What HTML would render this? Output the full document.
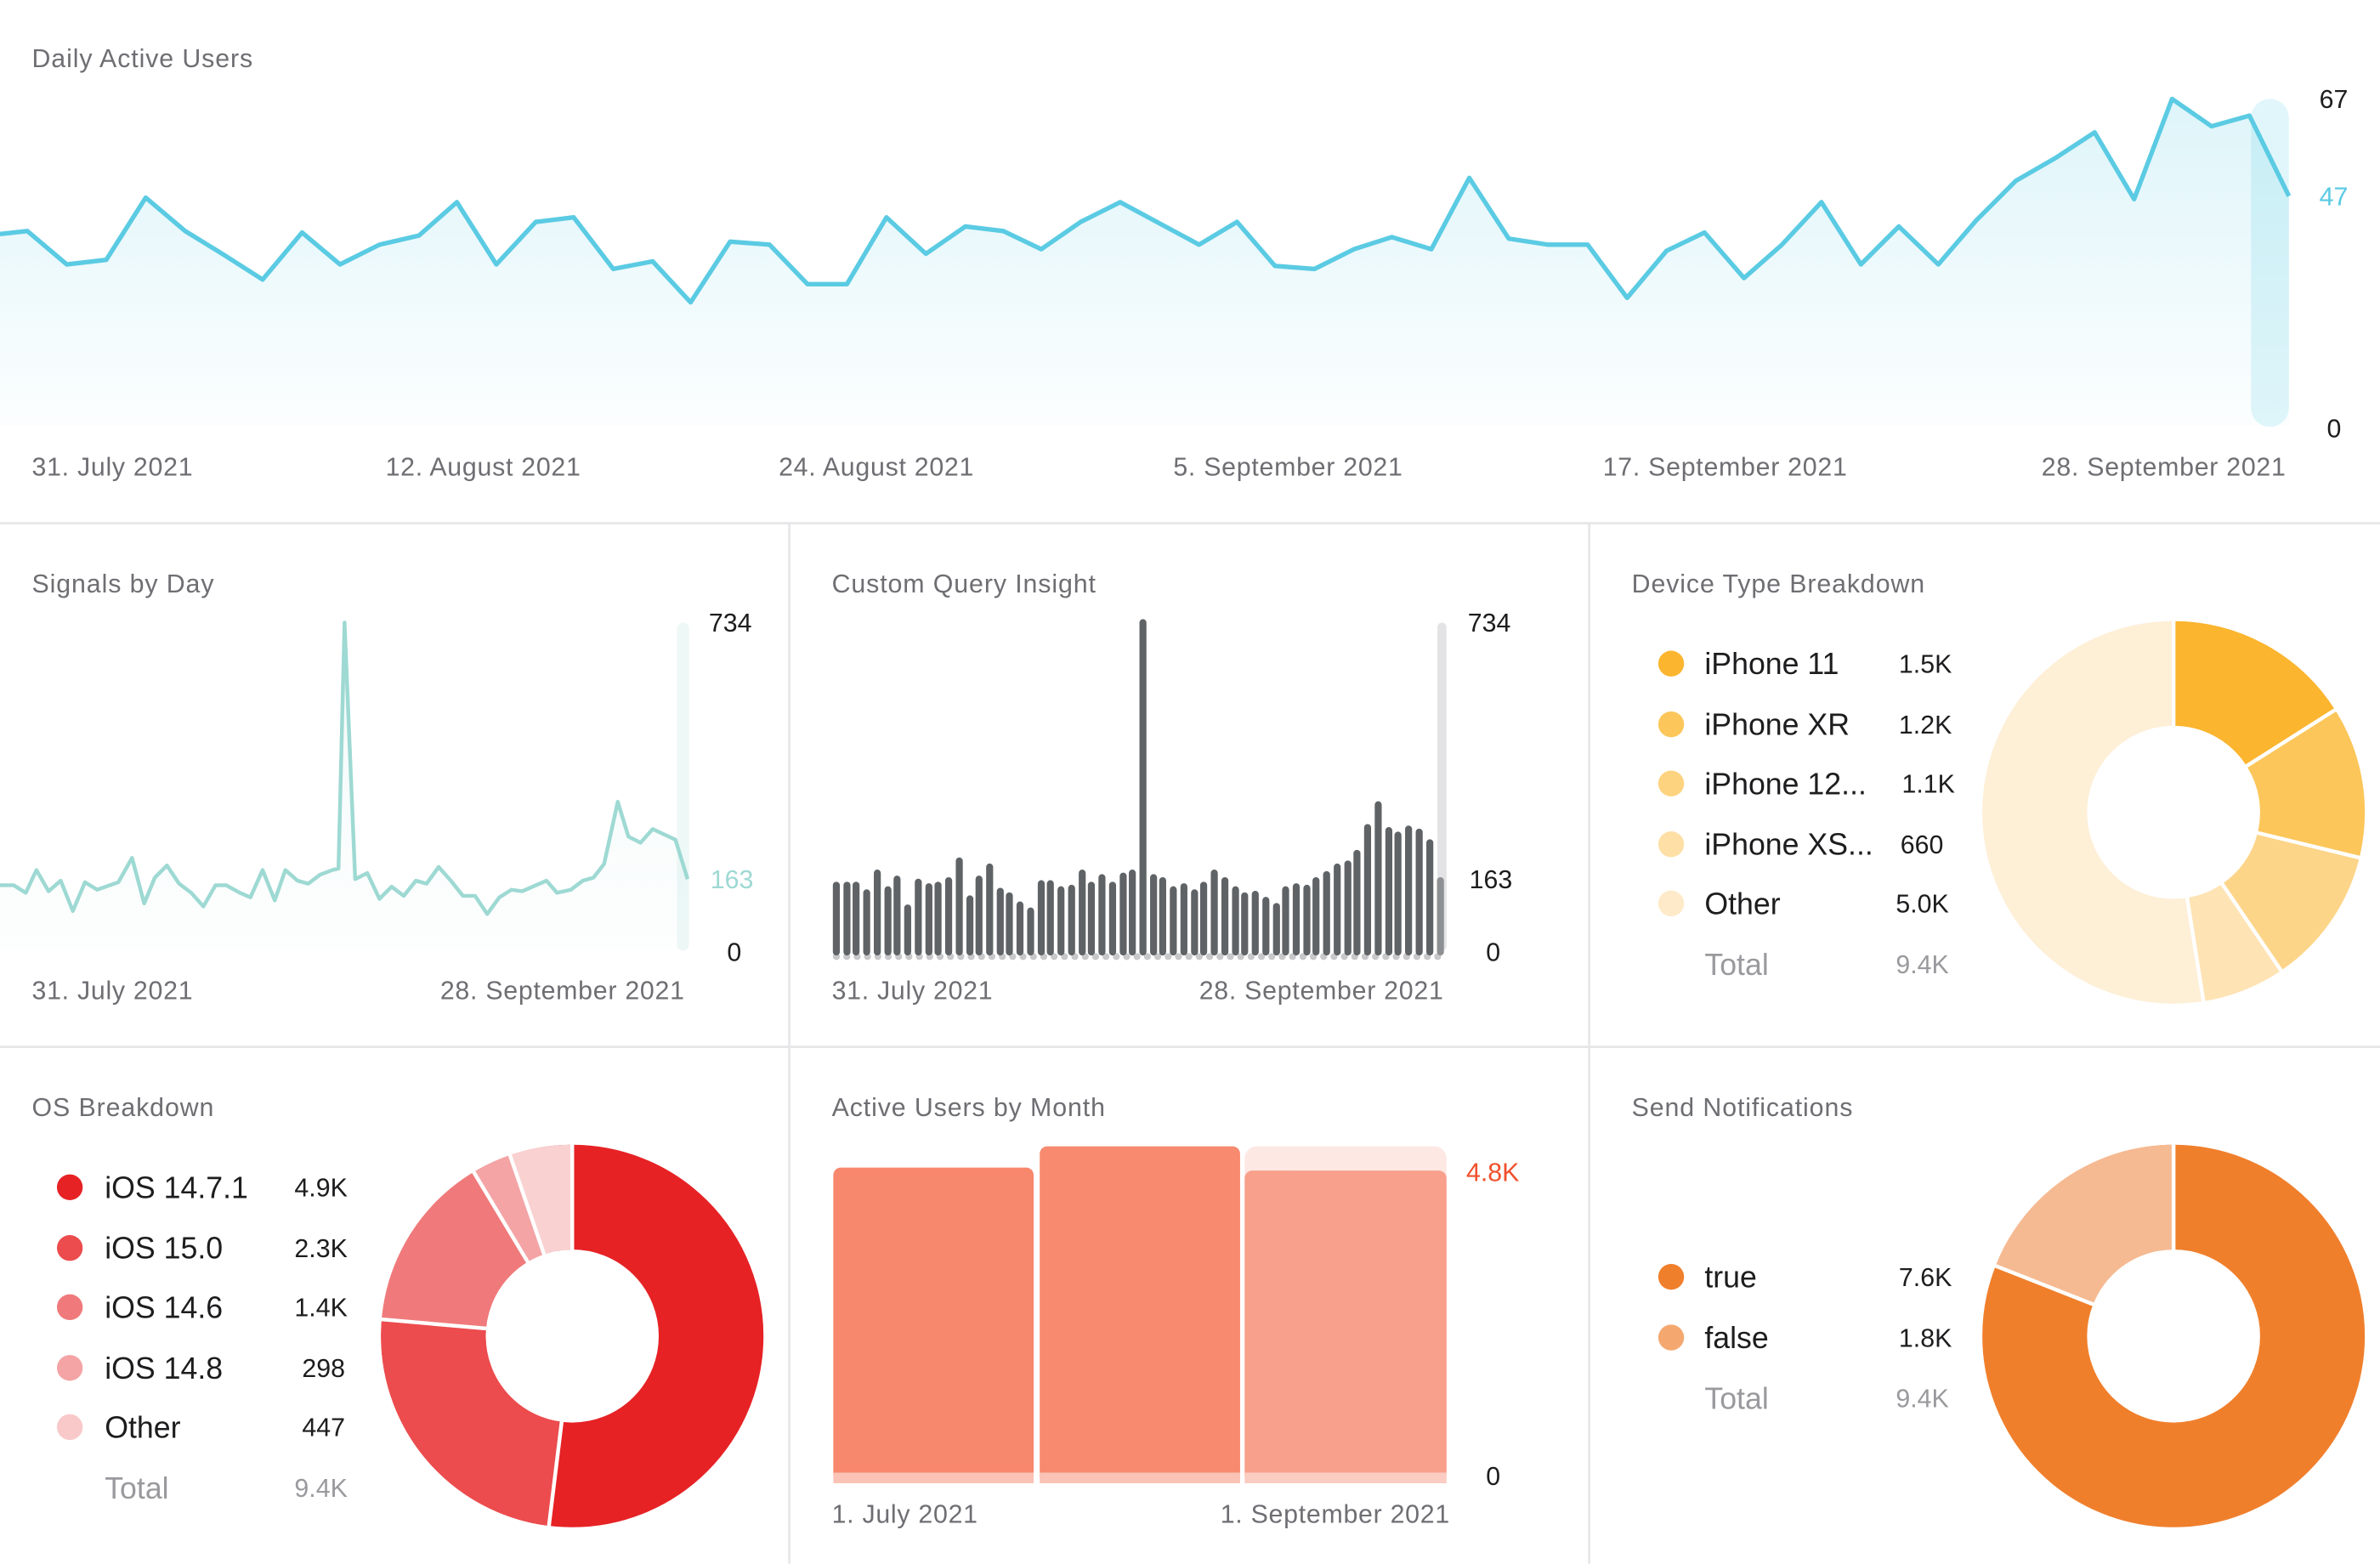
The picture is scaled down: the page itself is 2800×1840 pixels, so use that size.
<!DOCTYPE html>
<html><head><meta charset="utf-8">
<style>
html,body{margin:0;padding:0;background:#fff;}
svg{display:block}
text{font-family:"Liberation Sans",sans-serif;}
.t{font-size:17px;fill:#6e6e73;letter-spacing:0.5px;}
.ax{font-size:17px;fill:#6e6e73;letter-spacing:0.4px;}
.yl{font-size:17px;fill:#1d1d1f;}
.lg{font-size:20px;fill:#1d1d1f;}
.lv{font-size:17px;fill:#1d1d1f;}
.tot{font-size:20px;fill:#9a9a9e;}
.totv{font-size:17px;fill:#9a9a9e;}
</style></head>
<body>
<svg width="2800" height="1840" viewBox="0 0 1568 1030" xmlns="http://www.w3.org/2000/svg">
<defs>
<linearGradient id="g1" x1="0" y1="0" x2="0" y2="1">
<stop offset="0" stop-color="#5bcbe3" stop-opacity="0.2"/>
<stop offset="1" stop-color="#5bcbe3" stop-opacity="0.02"/>
</linearGradient>
<linearGradient id="g2" x1="0" y1="0" x2="0" y2="1">
<stop offset="0" stop-color="#9ed9d3" stop-opacity="0.15"/>
<stop offset="1" stop-color="#9ed9d3" stop-opacity="0.02"/>
</linearGradient>
</defs>
<rect width="1568" height="1030" fill="#fff"/>
<line x1="0" y1="344.5" x2="1568" y2="344.5" stroke="#e6e6e8" stroke-width="1.5"/>
<line x1="0" y1="689.5" x2="1568" y2="689.5" stroke="#e6e6e8" stroke-width="1.5"/>
<line x1="520" y1="345" x2="520" y2="1030" stroke="#e6e6e8" stroke-width="1.5"/>
<line x1="1047" y1="345" x2="1047" y2="1030" stroke="#e6e6e8" stroke-width="1.5"/>

<text class="t" x="21" y="44">Daily Active Users</text>
<rect x="1483" y="65" width="25" height="216" rx="12.5" fill="#5bcbe3" opacity="0.18"/>
<path fill="url(#g1)" d="M0,154 L18,152 L44,174 L70,171 L96,130 L122,152 L148,168 L173,184 L199,153 L224,174 L250,161 L276,155 L301,133 L327,174 L353,146 L378,143 L404,177 L430,172 L455,199 L481,159 L507,161 L532,187 L558,187 L584,143 L610,167 L636,149 L661,152 L686,164 L712,146 L738,133 L764,147 L790,161 L815,146 L840,175 L866,177 L892,164 L917,156 L943,164 L968,117 L994,157 L1020,161 L1046,161 L1072,196 L1098,165 L1123,153 L1149,183 L1174,161 L1200,133 L1226,174 L1251,149 L1277,174 L1302,145 L1328,119 L1354,104 L1380,87 L1406,131 L1431,65 L1457,83 L1482,76 L1508,129 L1508,280 L0,280 Z"/>
<polyline fill="none" stroke="#5bcbe3" stroke-width="3" stroke-linejoin="round" points="0,154 18,152 44,174 70,171 96,130 122,152 148,168 173,184 199,153 224,174 250,161 276,155 301,133 327,174 353,146 378,143 404,177 430,172 455,199 481,159 507,161 532,187 558,187 584,143 610,167 636,149 661,152 686,164 712,146 738,133 764,147 790,161 815,146 840,175 866,177 892,164 917,156 943,164 968,117 994,157 1020,161 1046,161 1072,196 1098,165 1123,153 1149,183 1174,161 1200,133 1226,174 1251,149 1277,174 1302,145 1328,119 1354,104 1380,87 1406,131 1431,65 1457,83 1482,76 1508,129"/>
<text class="yl" x="1528" y="71">67</text>
<text class="yl" x="1528" y="135" style="fill:#5bcbe3">47</text>
<text class="yl" x="1533" y="288">0</text>
<text class="ax" x="21" y="313">31. July 2021</text>
<text class="ax" x="254" y="313">12. August 2021</text>
<text class="ax" x="513" y="313">24. August 2021</text>
<text class="ax" x="773" y="313">5. September 2021</text>
<text class="ax" x="1056" y="313">17. September 2021</text>
<text class="ax" x="1345" y="313">28. September 2021</text>

<text class="t" x="21" y="390">Signals by Day</text>
<rect x="446" y="410" width="8" height="216" rx="4" fill="#9ed9d3" opacity="0.18"/>
<path fill="url(#g2)" d="M0,583 L9,583 L17,588 L24,573 L32,587 L40,580 L48,600 L56,581 L64,586 L78,581 L87,565 L95,595 L102,578 L110,570 L118,582 L126,588 L134,597 L142,583 L149,583 L158,588 L165,591 L173,573 L181,593 L188,573 L196,580 L203,582 L211,576 L219,573 L223,572 L227,410 L234,579 L242,575 L250,592 L258,584 L266,590 L274,580 L281,582 L289,571 L297,580 L305,590 L313,590 L321,602 L329,591 L337,586 L344,587 L360,580 L367,588 L376,586 L384,580 L391,578 L398,569 L407,528 L414,551 L422,555 L430,546 L445,553 L453,579 L453,626 L0,626 Z"/>
<polyline fill="none" stroke="#9ed9d3" stroke-width="2.5" stroke-linejoin="round" points="0,583 9,583 17,588 24,573 32,587 40,580 48,600 56,581 64,586 78,581 87,565 95,595 102,578 110,570 118,582 126,588 134,597 142,583 149,583 158,588 165,591 173,573 181,593 188,573 196,580 203,582 211,576 219,573 223,572 227,410 234,579 242,575 250,592 258,584 266,590 274,580 281,582 289,571 297,580 305,590 313,590 321,602 329,591 337,586 344,587 360,580 367,588 376,586 384,580 391,578 398,569 407,528 414,551 422,555 430,546 445,553 453,579"/>
<text class="yl" x="467" y="416">734</text>
<text class="yl" x="468" y="585" style="fill:#9ed9d3">163</text>
<text class="yl" x="479" y="633">0</text>
<text class="ax" x="21" y="658">31. July 2021</text>
<text class="ax" x="290" y="658">28. September 2021</text>

<text class="t" x="548" y="390">Custom Query Insight</text>
<rect x="947" y="410" width="6" height="216" rx="3" fill="#e3e3e5"/>
<path fill="none" stroke="#c8c8ca" stroke-width="4.5" stroke-linecap="round" stroke-dasharray="0.1 6.73" d="M551,630 H950"/>
<path fill="none" stroke="#5f6366" stroke-width="4.6" stroke-linecap="round" d="M551,627V583M558,627V583M564,627V583M571,627V588M578,627V575M585,627V586M591,627V579M598,627V598M605,627V581M612,627V584M618,627V583M625,627V580M632,627V567M639,627V592M645,627V579M652,627V571M659,627V587M665,627V590M672,627V596M679,627V600M686,627V582M692,627V582M699,627V586M706,627V585M713,627V575M719,627V583M726,627V578M733,627V583M740,627V577M746,627V575M753,627V410M760,627V578M766,627V580M773,627V586M780,627V584M787,627V588M793,627V583M800,627V575M807,627V580M814,627V586M820,627V590M827,627V589M834,627V593M841,627V597M847,627V586M854,627V584M861,627V585M867,627V580M874,627V576M881,627V571M888,627V569M894,627V562M901,627V545M908,627V530M915,627V547M921,627V550M928,627V546M935,627V548M942,627V555"/>
<path fill="none" stroke="#8e9193" stroke-width="4.6" stroke-linecap="round" d="M949,627V580"/>
<text class="yl" x="967" y="416">734</text>
<text class="yl" x="968" y="585">163</text>
<text class="yl" x="979" y="633">0</text>
<text class="ax" x="548" y="658">31. July 2021</text>
<text class="ax" x="790" y="658">28. September 2021</text>

<text class="t" x="1075" y="390">Device Type Breakdown</text>
<g>
<circle cx="1101" cy="437" r="8.5" fill="#fbb52f"/><text class="lg" x="1123" y="444">iPhone 11</text><text class="lv" x="1251" y="443">1.5K</text>
<circle cx="1101" cy="477" r="8.5" fill="#fcc65a"/><text class="lg" x="1123" y="484">iPhone XR</text><text class="lv" x="1251" y="483">1.2K</text>
<circle cx="1101" cy="516" r="8.5" fill="#fdd37f"/><text class="lg" x="1123" y="523">iPhone 12...</text><text class="lv" x="1253" y="522">1.1K</text>
<circle cx="1101" cy="556" r="8.5" fill="#fee0a6"/><text class="lg" x="1123" y="563">iPhone XS...</text><text class="lv" x="1252" y="562">660</text>
<circle cx="1101" cy="595" r="8.5" fill="#feeac8"/><text class="lg" x="1123" y="602">Other</text><text class="lv" x="1249" y="601">5.0K</text>
<text class="tot" x="1123" y="642">Total</text><text class="totv" x="1249" y="641">9.4K</text>
</g>
<g transform="rotate(-90 1432 535)" fill="none" stroke-width="69">
<circle cx="1432" cy="535" r="91.5" stroke="#feefd7"/>
<circle cx="1432" cy="535" r="91.5" stroke="#fbb52f" stroke-dasharray="92 600"/>
<circle cx="1432" cy="535" r="91.5" stroke="#fcc65a" stroke-dasharray="73.6 600" stroke-dashoffset="-92"/>
<circle cx="1432" cy="535" r="91.5" stroke="#fdd589" stroke-dasharray="67.3 600" stroke-dashoffset="-165.6"/>
<circle cx="1432" cy="535" r="91.5" stroke="#fee3b4" stroke-dasharray="40.2 600" stroke-dashoffset="-232.9"/>
</g>
<g stroke="#fff" stroke-width="2.5">
<line x1="1432" y1="535" x2="1432" y2="405"/>
<line x1="1432" y1="535" x2="1432" y2="405" transform="rotate(57.6 1432 535)"/>
<line x1="1432" y1="535" x2="1432" y2="405" transform="rotate(103.7 1432 535)"/>
<line x1="1432" y1="535" x2="1432" y2="405" transform="rotate(145.8 1432 535)"/>
<line x1="1432" y1="535" x2="1432" y2="405" transform="rotate(171 1432 535)"/>
</g>
<circle cx="1432" cy="535" r="56" fill="#fff"/>

<text class="t" x="21" y="735">OS Breakdown</text>
<g>
<circle cx="46" cy="782" r="8.5" fill="#e62225"/><text class="lg" x="69" y="789">iOS  14.7.1</text><text class="lv" x="194" y="788">4.9K</text>
<circle cx="46" cy="822" r="8.5" fill="#ec4c4e"/><text class="lg" x="69" y="829">iOS  15.0</text><text class="lv" x="194" y="828">2.3K</text>
<circle cx="46" cy="861" r="8.5" fill="#f07a7b"/><text class="lg" x="69" y="868">iOS  14.6</text><text class="lv" x="194" y="867">1.4K</text>
<circle cx="46" cy="901" r="8.5" fill="#f4a4a5"/><text class="lg" x="69" y="908">iOS  14.8</text><text class="lv" x="199" y="907">298</text>
<circle cx="46" cy="940" r="8.5" fill="#f9c9c9"/><text class="lg" x="69" y="947">Other</text><text class="lv" x="199" y="946">447</text>
<text class="tot" x="69" y="987">Total</text><text class="totv" x="194" y="986">9.4K</text>
</g>
<g transform="rotate(-90 377 880)" fill="none" stroke-width="69">
<circle cx="377" cy="880" r="91.5" stroke="#e62225"/>
<circle cx="377" cy="880" r="91.5" stroke="#ec4c4e" stroke-dasharray="140 600" stroke-dashoffset="-299"/>
<circle cx="377" cy="880" r="91.5" stroke="#f07a7b" stroke-dasharray="86 600" stroke-dashoffset="-439"/>
<circle cx="377" cy="880" r="91.5" stroke="#f4a4a5" stroke-dasharray="19 600" stroke-dashoffset="-525"/>
<circle cx="377" cy="880" r="91.5" stroke="#f9d1d1" stroke-dasharray="31 600" stroke-dashoffset="-544"/>
</g>
<g stroke="#fff" stroke-width="2.5">
<line x1="377" y1="880" x2="377" y2="750"/>
<line x1="377" y1="880" x2="377" y2="750" transform="rotate(187 377 880)"/>
<line x1="377" y1="880" x2="377" y2="750" transform="rotate(275 377 880)"/>
<line x1="377" y1="880" x2="377" y2="750" transform="rotate(329 377 880)"/>
<line x1="377" y1="880" x2="377" y2="750" transform="rotate(341 377 880)"/>
</g>
<circle cx="377" cy="880" r="56" fill="#fff"/>

<text class="t" x="548" y="735">Active Users by Month</text>
<rect x="820" y="755" width="133" height="222" rx="8" fill="#fde8e3"/>
<rect x="549" y="769" width="132" height="208" rx="5" fill="#f7876d"/>
<rect x="685" y="755" width="132" height="222" rx="5" fill="#f78a6f"/>
<rect x="820" y="771" width="133" height="206" rx="5" fill="#f8a08c"/>
<rect x="549" y="970" width="132" height="7" fill="#fac3b6"/>
<rect x="685" y="970" width="132" height="7" fill="#fac3b6"/>
<rect x="820" y="970" width="133" height="7" fill="#fbcdc2"/>
<text class="yl" x="966" y="778" style="fill:#f0502d">4.8K</text>
<text class="yl" x="979" y="978">0</text>
<text class="ax" x="548" y="1003">1. July 2021</text>
<text class="ax" x="804" y="1003">1. September 2021</text>

<text class="t" x="1075" y="735">Send Notifications</text>
<circle cx="1101" cy="841" r="8.5" fill="#f07f2c"/><text class="lg" x="1123" y="848">true</text><text class="lv" x="1251" y="847">7.6K</text>
<circle cx="1101" cy="881" r="8.5" fill="#f4a870"/><text class="lg" x="1123" y="888">false</text><text class="lv" x="1251" y="887">1.8K</text>
<text class="tot" x="1123" y="928">Total</text><text class="totv" x="1249" y="927">9.4K</text>
<g transform="rotate(-90 1432 880)" fill="none" stroke-width="69">
<circle cx="1432" cy="880" r="91.5" stroke="#f07f2c"/>
<circle cx="1432" cy="880" r="91.5" stroke="#f6ba92" stroke-dasharray="109 600" stroke-dashoffset="-466"/>
</g>
<g stroke="#fff" stroke-width="2.5">
<line x1="1432" y1="880" x2="1432" y2="750"/>
<line x1="1432" y1="880" x2="1432" y2="750" transform="rotate(291.5 1432 880)"/>
</g>
<circle cx="1432" cy="880" r="56" fill="#fff"/>
</svg>
</body></html>
